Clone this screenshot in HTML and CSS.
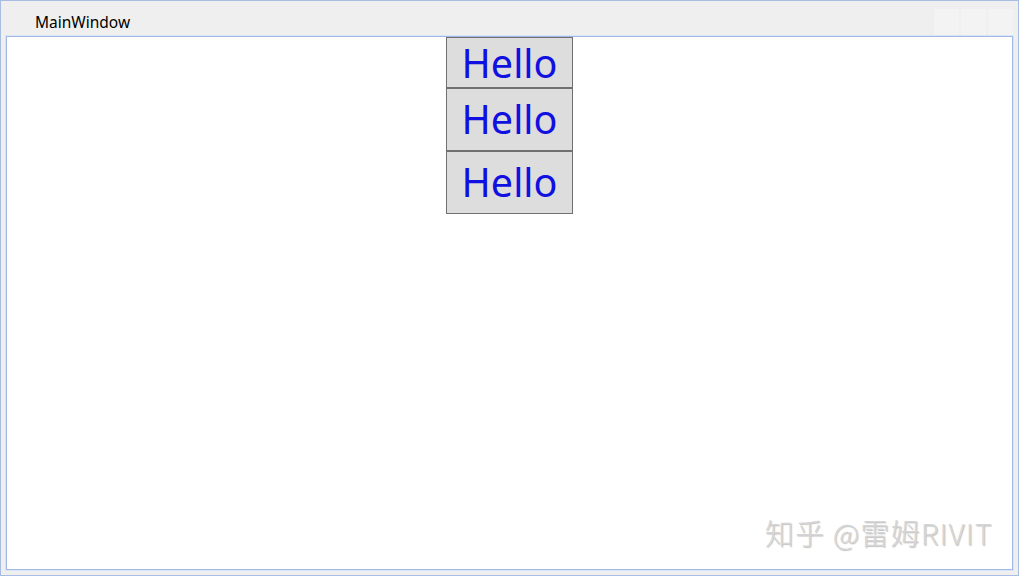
FILE: index.html
```html
<!DOCTYPE html>
<html lang="en">
<head>
    <meta charset="UTF-8">
    <title>MainWindow</title>
    <link rel="stylesheet" href="styles.css">
</head>
<body>
    <div class="window">
        <div class="title-bar">
            <span class="title">MainWindow</span>
            <div class="caption-buttons">
                <span class="caption-btn"></span>
                <span class="caption-btn"></span>
                <span class="caption-btn"></span>
            </div>
        </div>
        <div class="client">
            <div class="stack">
                <button class="hello-btn first">Hello</button>
                <button class="hello-btn">Hello</button>
                <button class="hello-btn">Hello</button>
            </div>
            <div class="watermark">知乎 @雷姆RIVIT</div>
        </div>
    </div>
</body>
</html>
```

FILE: styles.css
```css
body {
    margin: 0;
    background: #efefef;
    font-family: "Noto Sans", "Open Sans", sans-serif;
}

.window {
    width: 1019px;
    height: 576px;
    box-sizing: border-box;
    border: 1px solid #a9bde3;
    background: #efefef;
    display: flex;
    flex-direction: column;
    padding: 0 5px 5px 5px;
}

.title-bar {
    height: 35px;
    display: flex;
    align-items: center;
    justify-content: space-between;
}
.title {
    margin-left: 29px;
    font-size: 15.5px;
    color: #000;
    margin-top: 6px;
}
.caption-buttons {
    display: flex;
    gap: 2px;
    align-self: stretch;
    padding-top: 8px;
}
.caption-btn {
    width: 25px;
    background: #f3f3f3;
}

.client {
    flex: 1;
    position: relative;
    background: #fff;
    border: 1px solid #9fb8e6;
    box-shadow: 0 0 0 1px #dbe5f7;
}

.stack {
    display: flex;
    flex-direction: column;
    align-items: center;
}
.hello-btn {
    width: 127px;
    height: 63px;
    background: #dddddd;
    border: 1px solid #707070;
    color: #1010e0;
    font-family: "Noto Sans", "Open Sans", sans-serif;
    font-size: 39.5px;
    padding: 0;
    line-height: 1;
}
.hello-btn.first {
    height: 51px;
    padding-top: 2px;
}

.watermark {
    position: absolute;
    right: 19px;
    bottom: 16px;
    font-family: "Noto Sans CJK SC", sans-serif;
    font-weight: 300;
    font-size: 29px;
    color: #d6d6d6;
    text-shadow: 1px 1px 1px rgba(0, 0, 0, 0.25);
    letter-spacing: 1.2px;
}
```
